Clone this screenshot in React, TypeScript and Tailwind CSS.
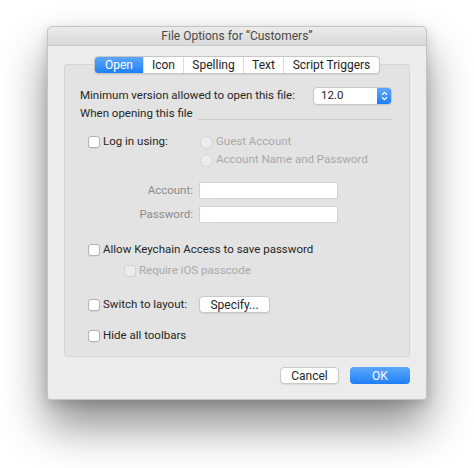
import React from "react";

const Checkbox = ({ disabled }: { disabled?: boolean }) => (
  <div
    className={
      disabled
        ? "w-[12px] h-[12px] rounded-[3px] border border-[#d2d2d2] bg-[#ececec] shrink-0"
        : "w-[12px] h-[12px] rounded-[3px] border border-[#b3b3b3] bg-white shadow-[0_0.5px_0.5px_rgba(0,0,0,0.1)] shrink-0"
    }
  />
);

const Radio = () => (
  <div className="w-[13px] h-[13px] rounded-full border border-[#d4d4d4] bg-[#ececec] shrink-0" />
);

const tabs = ["Open", "Icon", "Spelling", "Text", "Script Triggers"];
const tabWidths = ["w-[48px]", "w-[40px]", "w-[60px]", "w-[40px]", "w-[96px]"];

export default function App() {
  return (
    <div
      className="w-[474px] h-[468px] bg-white pt-[26px] pl-[47px] text-[#262626] text-[11.5px]"
      style={{ fontFamily: "Roboto, 'Liberation Sans', sans-serif" }}
    >
      <div className="w-[380px] h-[374px] flex flex-col bg-[#ececec] rounded-t-[5px] rounded-b-[3px] border border-[#c4c4c4] shadow-[0_26px_45px_rgba(0,0,0,0.45),0_4px_12px_rgba(0,0,0,0.15)]">
        {/* title bar */}
        <div className="h-[19px] shrink-0 flex items-center justify-center rounded-t-[5px] bg-gradient-to-b from-[#ebebeb] to-[#d9d9d9] border-b border-[#c9c9c9] text-[#4a4a4a] text-[12px]">
          File Options for “Customers”
        </div>

        {/* tab box */}
        <div className="mt-[18px] ml-[16px] w-[346px] h-[293px] flex flex-col bg-[#e3e3e3] border border-[#d6d6d6] rounded-[3px] px-[15px]">
          <div className="-mt-[9px] self-center flex h-[18px] bg-white border border-[#c6c6c6] rounded-[4px] shadow-[0_1px_1px_rgba(0,0,0,0.08)] overflow-hidden">
            {tabs.map((t, i) => (
              <div
                key={t}
                className={
                  i === 0
                    ? `${tabWidths[i]} flex items-center justify-center text-white text-[12px] bg-gradient-to-b from-[#5ba8fb] to-[#1b7ff5]`
                    : `${tabWidths[i]} flex items-center justify-center text-[12px] text-[#222] border-l border-[#dcdcdc]`
                }
              >
                {t}
              </div>
            ))}
          </div>

          {/* minimum version */}
          <div className="mt-[13px] h-[18px] flex items-center">
            <span className="flex-1">Minimum version allowed to open this file:</span>
            <div className="mr-[2px] w-[79px] h-[18px] flex bg-white border border-[#c8c8c8] rounded-[4px] overflow-hidden shadow-[0_1px_1px_rgba(0,0,0,0.06)]">
              <span className="flex-1 pl-[7px] flex items-center">12.0</span>
              <div className="w-[14px] flex items-center justify-center bg-gradient-to-b from-[#5ba8fb] to-[#1b7ff5]">
                <svg width="7" height="10" viewBox="0 0 7 10" fill="none" stroke="white" strokeWidth="1.3">
                  <path d="M1 3.8 L3.5 1.3 L6 3.8" />
                  <path d="M1 6.2 L3.5 8.7 L6 6.2" />
                </svg>
              </div>
            </div>
          </div>

          {/* when opening */}
          <div className="mt-[2px] h-[14px] flex items-center">
            <span>When opening this file</span>
            <div className="flex-1 ml-[5px] mr-[1px] mt-[10px] h-px bg-[#cdcdcd]" />
          </div>

          {/* log in */}
          <div className="mt-[12px] flex pl-[8px]">
            <div className="w-[112px] h-[18px] flex items-center gap-[3px]">
              <Checkbox />
              <span>Log in using:</span>
            </div>
            <div className="flex flex-col text-[#a9a9a9]">
              <div className="h-[18px] flex items-center gap-[3px]">
                <Radio />
                <span>Guest Account</span>
              </div>
              <div className="h-[18px] flex items-center gap-[3px]">
                <Radio />
                <span>Account Name and Password</span>
              </div>
            </div>
          </div>

          {/* account fields */}
          <div className="mt-[13px] flex flex-col gap-[7px] text-[#8c8c8c]">
            <div className="flex items-center">
              <span className="w-[113px] text-right">Account:</span>
              <div className="ml-[6px] w-[139px] h-[17px] bg-white border border-[#d2d2d2]" />
            </div>
            <div className="flex items-center">
              <span className="w-[113px] text-right">Password:</span>
              <div className="ml-[6px] w-[139px] h-[17px] bg-white border border-[#d2d2d2]" />
            </div>
          </div>

          {/* keychain */}
          <div className="mt-[17px] pl-[8px] h-[18px] flex items-center gap-[3px]">
            <Checkbox />
            <span>Allow Keychain Access to save password</span>
          </div>
          <div className="mt-[3px] pl-[44px] h-[18px] flex items-center gap-[3px] text-[#a9a9a9]">
            <Checkbox disabled />
            <span>Require iOS passcode</span>
          </div>

          {/* switch to layout */}
          <div className="mt-[16px] pl-[8px] h-[18px] flex items-center">
            <div className="w-[111px] flex items-center gap-[3px]">
              <Checkbox />
              <span>Switch to layout:</span>
            </div>
            <div className="w-[71px] h-[17px] flex items-center justify-center bg-white border border-[#c8c8c8] rounded-[4px] shadow-[0_1px_1px_rgba(0,0,0,0.08)] text-[12px]">
              Specify...
            </div>
          </div>

          {/* hide toolbars */}
          <div className="mt-[13px] pl-[8px] h-[18px] flex items-center gap-[3px]">
            <Checkbox />
            <span>Hide all toolbars</span>
          </div>
        </div>

        {/* buttons */}
        <div className="mt-[10px] mr-[16px] flex justify-end gap-[11px]">
          <div className="w-[59px] h-[17px] flex items-center justify-center bg-white border border-[#c8c8c8] rounded-[4px] shadow-[0_1px_1px_rgba(0,0,0,0.08)] text-[12px]">
            Cancel
          </div>
          <div className="w-[60px] h-[17px] flex items-center justify-center rounded-[4px] bg-gradient-to-b from-[#5ba8fb] to-[#1b7ff5] text-white text-[12px]">
            OK
          </div>
        </div>
      </div>
    </div>
  );
}
